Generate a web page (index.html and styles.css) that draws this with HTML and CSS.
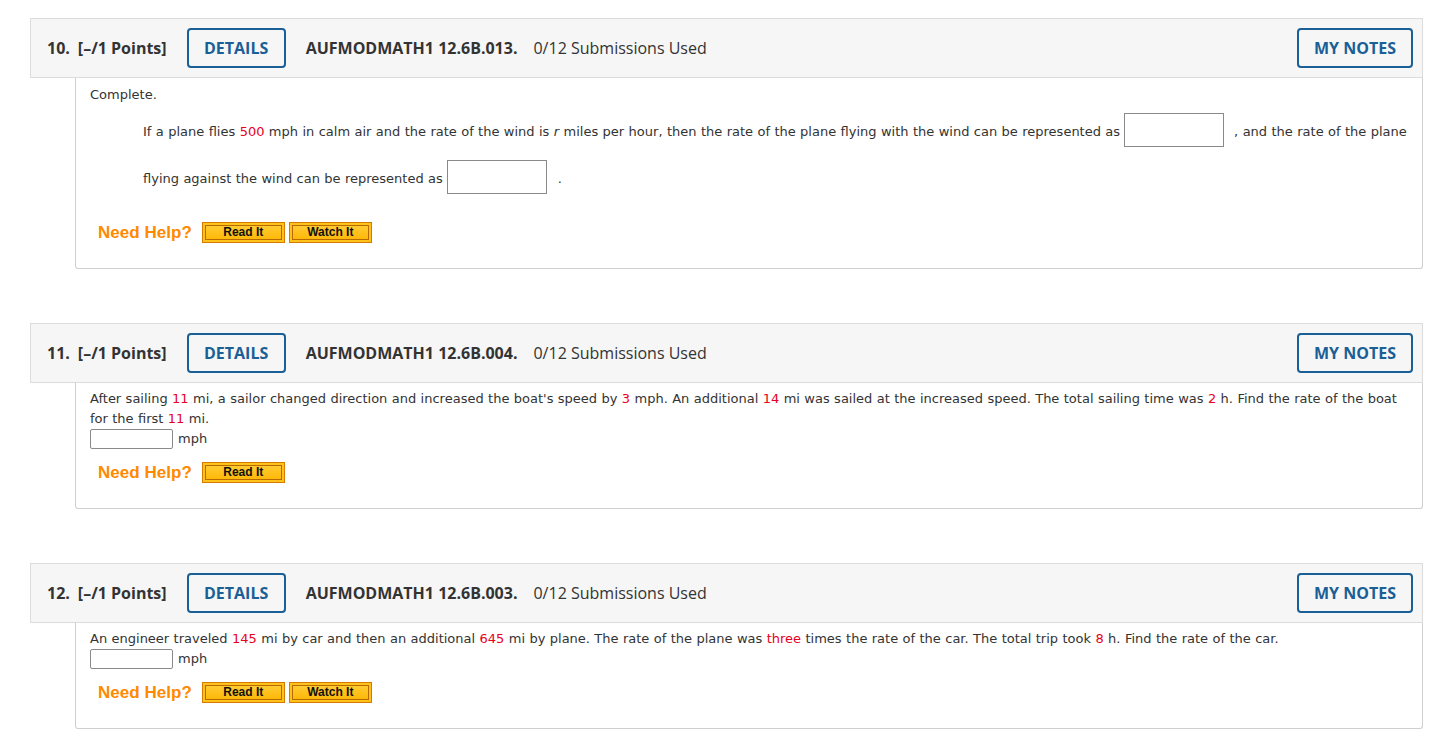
FILE: index.html
```html
<!DOCTYPE html>
<html>
<head>
<meta charset="utf-8">
<link rel="stylesheet" href="styles.css">
</head>
<body>
<div class="page">

  <div class="q">
    <div class="qhead">
      <span class="num">10.</span>
      <span class="pts">[–/1 Points]</span>
      <button class="outline">DETAILS</button>
      <span class="code">AUFMODMATH1 12.6B.013.</span>
      <span class="subs">0/12 Submissions Used</span>
      <button class="outline notes">MY NOTES</button>
    </div>
    <div class="qbody">
      <div class="line">Complete.</div>
      <div class="indent">
        <div class="row r1">If a plane flies&nbsp;<span class="red">500</span>&nbsp;mph in calm air and the rate of the wind is&nbsp;<i>r</i>&nbsp;miles per hour, then the rate of the plane flying with the wind can be represented as <span class="box"></span><span class="after">, and the rate of the plane</span></div>
        <div class="row r2">flying against the wind can be represented as <span class="box"></span><span class="dot">.</span></div>
      </div>
      <div class="help h1">
        <span class="needhelp">Need Help?</span>
        <button class="hbtn">Read It</button>
        <button class="hbtn">Watch It</button>
      </div>
    </div>
  </div>

  <div class="q">
    <div class="qhead">
      <span class="num">11.</span>
      <span class="pts">[–/1 Points]</span>
      <button class="outline">DETAILS</button>
      <span class="code">AUFMODMATH1 12.6B.004.</span>
      <span class="subs">0/12 Submissions Used</span>
      <button class="outline notes">MY NOTES</button>
    </div>
    <div class="qbody">
      <div class="para">After sailing <span class="red">11</span> mi, a sailor changed direction and increased the boat's speed by <span class="red">3</span> mph. An additional <span class="red">14</span> mi was sailed at the increased speed. The total sailing time was <span class="red">2</span> h. Find the rate of the boat for the first <span class="red">11</span> mi.</div>
      <div class="ans"><span class="small-box"></span><span class="unit">mph</span></div>
      <div class="help">
        <span class="needhelp">Need Help?</span>
        <button class="hbtn">Read It</button>
      </div>
    </div>
  </div>

  <div class="q">
    <div class="qhead">
      <span class="num">12.</span>
      <span class="pts">[–/1 Points]</span>
      <button class="outline">DETAILS</button>
      <span class="code">AUFMODMATH1 12.6B.003.</span>
      <span class="subs">0/12 Submissions Used</span>
      <button class="outline notes">MY NOTES</button>
    </div>
    <div class="qbody">
      <div class="para">An engineer traveled <span class="red">145</span> mi by car and then an additional <span class="red">645</span> mi by plane. The rate of the plane was <span class="red">three</span> times the rate of the car. The total trip took <span class="red">8</span> h. Find the rate of the car.</div>
      <div class="ans"><span class="small-box"></span><span class="unit">mph</span></div>
      <div class="help">
        <span class="needhelp">Need Help?</span>
        <button class="hbtn">Read It</button>
        <button class="hbtn">Watch It</button>
      </div>
    </div>
  </div>

</div>
</body>
</html>
```

FILE: styles.css
```css
html, body {
  margin: 0;
  padding: 0;
  background: #fff;
}

.page {
  padding: 18px 17px 0 30px;
  display: flex;
  flex-direction: column;
  gap: 54px;
}

.qhead {
  box-sizing: border-box;
  height: 60px;
  background: #f6f6f6;
  border: 1px solid #dcdcdc;
  display: flex;
  align-items: center;
  padding: 0 9px 0 16px;
  font-family: "Open Sans", sans-serif;
  font-size: 16px;
  color: #333;
}

.num {
  font-weight: 700;
  margin-right: 8px;
}

.pts {
  font-weight: 700;
  margin-right: 20px;
}

.outline {
  box-sizing: border-box;
  height: 40px;
  background: #f6f6f6;
  border: 2px solid #1a5f96;
  border-radius: 4px;
  color: #1a5f96;
  font-family: "Open Sans", sans-serif;
  font-weight: 700;
  font-size: 16px;
  padding: 0;
  width: 99px;
}

.code {
  font-weight: 700;
  margin-left: 20px;
  margin-right: 16px;
}

.subs {
  font-weight: 400;
}

.notes {
  margin-left: auto;
  width: 116px;
}

.qbody {
  margin-left: 45px;
  border: 1px solid #cfcfcf;
  border-top: none;
  border-radius: 0 0 3px 3px;
  padding: 6px 15px 25px 14px;
  font-family: "DejaVu Sans", Verdana, sans-serif;
  font-size: 13px;
  line-height: 20px;
  word-spacing: 0.27px;
  color: #333;
}

.line {
  height: 20px;
  padding-top: 1px;
}

.indent {
  padding-left: 53px;
}

.row {
  box-sizing: border-box;
  display: flex;
  align-items: center;
  height: 34px;
  padding-top: 4px;
  white-space: nowrap;
}

.row > * {
  flex-shrink: 0;
}

.r1 {
  margin-top: 8px;
}

.r2 {
  margin-top: 13px;
}

.box {
  display: inline-block;
  box-sizing: border-box;
  width: 100px;
  height: 34px;
  border: 1px solid #8a8a8a;
  background: #fff;
  margin-left: 4px;
  margin-top: -4px;
}

.after {
  margin-left: 10px;
}

.dot {
  margin-left: 11px;
}

.red {
  color: #e8001c;
}

.ans {
  display: flex;
  align-items: center;
  height: 20px;
}

.small-box {
  box-sizing: border-box;
  width: 83px;
  height: 20px;
  border: 1px solid #8a8a8a;
  border-radius: 2px;
  background: #fff;
  margin-right: 5px;
}

.help {
  display: flex;
  align-items: center;
  height: 21px;
  margin-top: 13px;
  padding-left: 8px;
}

.h1 {
  margin-top: 28px;
}

.needhelp {
  font-family: "Liberation Sans", Arial, sans-serif;
  font-weight: 700;
  font-size: 17px;
  color: #ff8a00;
  margin-right: 10px;
}

.hbtn {
  box-sizing: border-box;
  width: 83px;
  height: 21px;
  margin-right: 4px;
  padding: 0;
  border: 1px solid #d77a00;
  background: linear-gradient(#ffcf3a, #ffb400);
  box-shadow: inset 0 0 0 2px #ffc21a, inset 0 0 0 3px #b86a00;
  font-family: "Liberation Sans", Arial, sans-serif;
  font-weight: 700;
  font-size: 12px;
  color: #111;
  line-height: 19px;
}
```
